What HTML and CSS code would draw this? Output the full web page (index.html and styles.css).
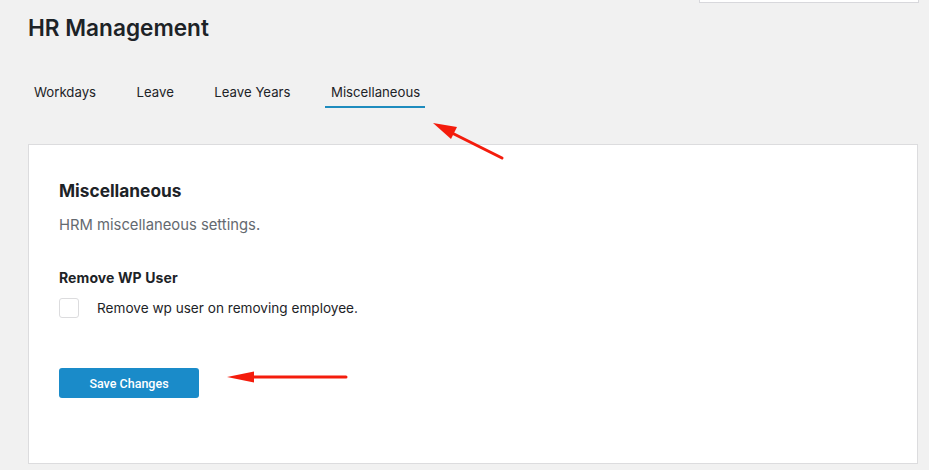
FILE: index.html
```html
<!DOCTYPE html>
<html lang="en">
<head>
<meta charset="utf-8">
<title>HR Management</title>
<link rel="stylesheet" href="styles.css">
</head>
<body>
<div class="wrap">
  <div class="topbox"></div>
  <h1 class="page-title">HR Management</h1>
  <nav class="tabs">
    <a class="tab">Workdays</a>
    <a class="tab">Leave</a>
    <a class="tab">Leave Years</a>
    <a class="tab active">Miscellaneous</a>
  </nav>
  <section class="card">
    <h2 class="card-title">Miscellaneous</h2>
    <p class="card-desc">HRM miscellaneous settings.</p>
    <div class="field">
      <div class="field-label">Remove WP User</div>
      <label class="check-row">
        <span class="checkbox"></span>
        <span class="check-text">Remove wp user on removing employee.</span>
      </label>
    </div>
    <button class="btn-primary">Save Changes</button>
  </section>
  <svg class="anno anno-1" width="80" height="45" viewBox="0 0 80 45">
    <line x1="72" y1="40" x2="18" y2="13" stroke="#f41c0c" stroke-width="3" stroke-linecap="round"/>
    <polygon points="3,5 27,9 21,21" fill="#f41c0c"/>
  </svg>
  <svg class="anno anno-2" width="124" height="14" viewBox="0 0 124 14">
    <line x1="24" y1="7" x2="120" y2="7" stroke="#f41c0c" stroke-width="3" stroke-linecap="round"/>
    <polygon points="1,7 28,1.5 28,12.5" fill="#f41c0c"/>
  </svg>
</div>
</body>
</html>
```

FILE: styles.css
```css
* { box-sizing: border-box; }
html, body { margin: 0; padding: 0; }
body {
  background: #f1f1f1;
  font-family: Inter, Roboto, "Liberation Sans", sans-serif;
  color: #1d2327;
  width: 929px;
  height: 470px;
  overflow: hidden;
}
.wrap {
  position: relative;
  padding: 0 11px 0 28px;
}
.topbox {
  position: absolute;
  top: -10px;
  left: 699px;
  width: 220px;
  height: 13px;
  background: #fff;
  border: 1px solid #d8d8dc;
  border-top: none;
}
.page-title {
  margin: 0;
  padding-top: 14px;
  font-size: 22.6px;
  font-weight: 600;
  line-height: 28px;
  color: #1d2327;
}
.tabs {
  display: flex;
  gap: 29.5px;
  margin-top: 42px;
}
.tab {
  display: block;
  padding: 0 5px 5px 6px;
  font-size: 13.2px;
  line-height: 17px;
  color: #1d2327;
  border-bottom: 2px solid transparent;
}
.tab.active {
  border-bottom-color: #1e8cbe;
}
.card {
  margin-top: 36px;
  background: #fff;
  border: 1px solid #dcdcde;
  height: 320px;
  padding: 36px 30px 0;
}
.card-title {
  margin: 0;
  font-size: 17.3px;
  line-height: 20px;
  font-weight: 700;
  color: #1d2327;
}
.card-desc {
  margin: 14px 0 0;
  font-size: 14.8px;
  line-height: 20px;
  color: #646970;
}
.field { margin-top: 34px; }
.field-label {
  font-size: 14px;
  font-weight: 700;
  line-height: 18px;
  letter-spacing: 0.1px;
}
.check-row {
  display: flex;
  align-items: center;
  gap: 18px;
  margin-top: 11px;
}
.checkbox {
  display: block;
  width: 20px;
  height: 20px;
  border: 1px solid #dcdcde;
  border-radius: 3px;
  background: #fff;
}
.check-text {
  font-size: 13.6px;
  line-height: 18px;
  color: #1d2327;
}
.btn-primary {
  display: block;
  margin-top: 50px;
  width: 140px;
  height: 30px;
  background: #1a8bc9;
  color: #fff;
  border: none;
  border-radius: 3px;
  font-family: Roboto, "Liberation Sans", sans-serif;
  font-size: 12.5px;
  font-weight: 500;
}
.anno { position: absolute; }
.anno-1 { left: 430px; top: 118px; }
.anno-2 { left: 226px; top: 370px; }
```
